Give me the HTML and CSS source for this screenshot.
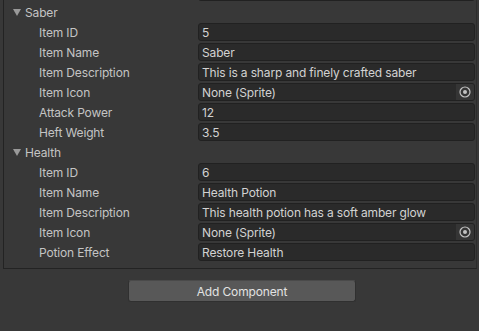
FILE: index.html
```html
<!DOCTYPE html>
<html lang="en">
<head>
    <meta charset="UTF-8">
    <title>Inspector</title>
    <link rel="stylesheet" href="styles.css">
</head>
<body>
<div class="inspector">
    <div class="component">
        <div class="row stub">
            <span class="label"></span>
            <div class="field"></div>
        </div>

        <div class="row foldout">
            <span class="arrow"></span>
            <span class="label">Saber</span>
        </div>
        <div class="row">
            <span class="label nested">Item ID</span>
            <div class="field">5</div>
        </div>
        <div class="row">
            <span class="label nested">Item Name</span>
            <div class="field">Saber</div>
        </div>
        <div class="row">
            <span class="label nested">Item Description</span>
            <div class="field">This is a sharp and finely crafted saber</div>
        </div>
        <div class="row">
            <span class="label nested">Item Icon</span>
            <div class="field object">
                <span class="value">None (Sprite)</span>
                <span class="picker">
                    <svg width="12" height="12" viewBox="0 0 12 12"><circle cx="6" cy="6" r="5" fill="none" stroke="#c2c2c2" stroke-width="1.2"/><circle cx="6" cy="6" r="2" fill="#c2c2c2"/></svg>
                </span>
            </div>
        </div>
        <div class="row">
            <span class="label nested">Attack Power</span>
            <div class="field">12</div>
        </div>
        <div class="row">
            <span class="label nested">Heft Weight</span>
            <div class="field">3.5</div>
        </div>

        <div class="row foldout">
            <span class="arrow"></span>
            <span class="label">Health</span>
        </div>
        <div class="row">
            <span class="label nested">Item ID</span>
            <div class="field">6</div>
        </div>
        <div class="row">
            <span class="label nested">Item Name</span>
            <div class="field">Health Potion</div>
        </div>
        <div class="row">
            <span class="label nested">Item Description</span>
            <div class="field">This health potion has a soft amber glow</div>
        </div>
        <div class="row">
            <span class="label nested">Item Icon</span>
            <div class="field object">
                <span class="value">None (Sprite)</span>
                <span class="picker">
                    <svg width="12" height="12" viewBox="0 0 12 12"><circle cx="6" cy="6" r="5" fill="none" stroke="#c2c2c2" stroke-width="1.2"/><circle cx="6" cy="6" r="2" fill="#c2c2c2"/></svg>
                </span>
            </div>
        </div>
        <div class="row">
            <span class="label nested">Potion Effect</span>
            <div class="field">Restore Health</div>
        </div>
    </div>

    <div class="footer">
        <button class="add-button">Add Component</button>
    </div>
</div>
</body>
</html>
```

FILE: styles.css
```css
body {
    margin: 0;
    padding: 0;
    background-color: #383838;
    font-family: Inter, "Liberation Sans", sans-serif;
    font-size: 12px;
    letter-spacing: -0.15px;
    color: #c4c4c4;
    overflow: hidden;
}

.inspector {
    width: 479px;
    height: 331px;
    display: flex;
    flex-direction: column;
}

.component {
    margin-left: 3px;
    margin-right: 2px;
    border-left: 1px solid #232323;
    border-right: 1px solid #2c2c2c;
    border-bottom: 1px solid #232323;
    padding-bottom: 6px;
    margin-top: -18px;
}

.row {
    height: 20px;
    display: flex;
    align-items: center;
}

.label {
    width: 194px;
    flex-shrink: 0;
    white-space: nowrap;
    padding-top: 1px;
}

.label.nested {
    padding-left: 35px;
    width: 159px;
}

.foldout .label {
    width: auto;
}

.arrow {
    width: 0;
    height: 0;
    margin-left: 9px;
    margin-right: 4px;
    margin-top: 1px;
    border-left: 4px solid transparent;
    border-right: 4px solid transparent;
    border-top: 7px solid #9a9a9a;
}

.field {
    height: 16px;
    line-height: 18px;
    padding: 0 0 0 3px;
    box-sizing: content-box;
    width: 272px;
    background-color: #2a2a2a;
    border: 1px solid #212121;
    border-radius: 3px;
    color: #d2d2d2;
    white-space: nowrap;
    overflow: hidden;
}

.field.object {
    display: flex;
    justify-content: space-between;
    padding-right: 0;
}

.picker {
    width: 18px;
    height: 16px;
    display: flex;
    align-items: center;
    justify-content: center;
    background-color: #353535;
}

.picker svg {
    display: block;
}

.footer {
    display: flex;
    padding-top: 11px;
}

.add-button {
    margin-left: 128px;
    width: 228px;
    height: 22px;
    padding: 0;
    font-family: Inter, "Liberation Sans", sans-serif;
    font-size: 12px;
    letter-spacing: -0.15px;
    color: #e2e2e2;
    background-color: #585858;
    border: 1px solid #303030;
    border-top-color: #4a4a4a;
    border-radius: 3px;
}
```
